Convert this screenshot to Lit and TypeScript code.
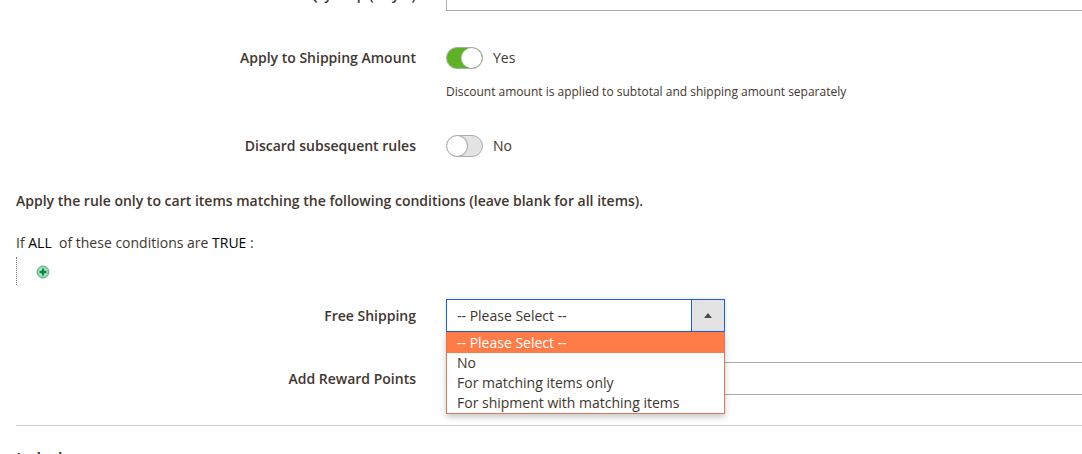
import { LitElement, html, css } from "lit";
import { customElement } from "lit/decorators.js";

@customElement("app-root")
export class AppRoot extends LitElement {
  static styles = css`
    :host {
      display: block;
      width: 1082px;
      height: 454px;
      overflow: hidden;
      background: #fff;
      color: #41362f;
      font-family: "Open Sans", sans-serif;
      font-size: 14px;
      line-height: 20px;
    }
    .page { padding-left: 16px; margin-top: -22px; }
    .row {
      display: grid;
      grid-template-columns: 400px 1fr;
      column-gap: 30px;
      align-items: center;
    }
    .label { text-align: right; font-weight: 600; }
    .input {
      height: 33px;
      box-sizing: border-box;
      border: 1px solid #adadad;
      background: #fff;
      width: 700px;
    }
    .r-qty { margin-bottom: 36px; }
    .r-apply { height: 22px; }
    .note { margin: 13px 0 0 430px; font-size: 12px; line-height: 20px; }
    .r-discard { height: 22px; margin-top: 33px; }
    .toggle-wrap { display: flex; align-items: center; gap: 10px; }
    .toggle {
      width: 37px;
      height: 22px;
      box-sizing: border-box;
      border: 1px solid #adadad;
      border-radius: 11px;
      background: #e3e3e3;
      display: flex;
      overflow: hidden;
    }
    .toggle.on { background: #5fb12a; justify-content: flex-end; }
    .knob {
      width: 20px;
      height: 20px;
      border-radius: 50%;
      background: #fff;
      box-shadow: 0 0 0 1px #adadad;
    }
    .toggle.on .knob { box-shadow: -1px 0 0 0 #cfe6bf; }
    .heading { margin-top: 34px; font-weight: 600; line-height: 20px; }
    .cond { margin-top: 22px; line-height: 20px; }
    .cond b { font-weight: 400; color: #000; }
    .tree {
      margin-top: 4px;
      height: 28px;
      border-left: 1px dotted #777;
      padding-left: 20px;
      display: flex;
      align-items: center;
      box-sizing: border-box;
    }
    .plus { width: 14px; height: 14px; display: block; margin-top: 2px; margin-left: -1px; }
    .r-free { margin-top: 14px; height: 33px; }
    .select-wrap { position: relative; width: 279px; }
    .select {
      width: 279px;
      height: 33px;
      box-sizing: border-box;
      border: 1px solid #1a5fe0;
      display: flex;
      align-items: center;
      background: #fff;
      box-shadow: 0 0 3px 1px rgba(0, 0, 0, 0.08);
    }
    .select span { flex: 1; padding-left: 10px; }
    .arrow {
      width: 33px;
      height: 31px;
      border-left: 1px solid #1a5fe0;
      background: #e3e3e3;
      display: flex;
      align-items: center;
      justify-content: center;
      box-sizing: border-box;
    }
    .arrow i {
      width: 0;
      height: 0;
      border-left: 4.5px solid transparent;
      border-right: 4.5px solid transparent;
      border-bottom: 5px solid #514943;
    }
    .menu {
      position: absolute;
      top: 33px;
      left: 0;
      width: 279px;
      box-sizing: border-box;
      border: 1px solid #d8795a;
      border-top: 0;
      background: #fff;
      box-shadow: 0 3px 6px rgba(0, 0, 0, 0.22);
      z-index: 2;
    }
    .opt { height: 20px; line-height: 20px; padding-left: 10px; }
    .opt.sel { background: #ff7b48; color: #fff; height: 21px; line-height: 21px; }
    .r-reward { margin-top: 30px; }
    .hr { margin-top: 30px; height: 1px; background: #cccccc; }
    .section { margin-top: 21px; font-size: 18px; font-weight: 600; line-height: 24px; }
  `;

  render() {
    return html`
      <div class="page">
        <div class="row r-qty">
          <div class="label">Discount Qty Step (Buy X)</div>
          <div class="input"></div>
        </div>
        <div class="row r-apply">
          <div class="label">Apply to Shipping Amount</div>
          <div class="toggle-wrap">
            <div class="toggle on"><div class="knob"></div></div>
            <span>Yes</span>
          </div>
        </div>
        <div class="note">Discount amount is applied to subtotal and shipping amount separately</div>
        <div class="row r-discard">
          <div class="label">Discard subsequent rules</div>
          <div class="toggle-wrap">
            <div class="toggle"><div class="knob"></div></div>
            <span>No</span>
          </div>
        </div>
        <div class="heading">Apply the rule only to cart items matching the following conditions (leave blank for all items).</div>
        <div class="cond">If <b>ALL</b>&nbsp; of these conditions are <b>TRUE</b> :</div>
        <div class="tree">
          <svg class="plus" viewBox="0 0 14 14">
            <circle cx="7" cy="7" r="6" fill="#8fd0aa" stroke="#5fb083" stroke-width="1"></circle>
            <circle cx="7" cy="7" r="4.2" fill="#c4e8d3"></circle>
            <path d="M7 3.5v7M3.5 7h7" stroke="#078a41" stroke-width="2.4"></path>
          </svg>
        </div>
        <div class="row r-free">
          <div class="label">Free Shipping</div>
          <div class="select-wrap">
            <div class="select">
              <span>-- Please Select --</span>
              <div class="arrow"><i></i></div>
            </div>
            <div class="menu">
              <div class="opt sel">-- Please Select --</div>
              <div class="opt">No</div>
              <div class="opt">For matching items only</div>
              <div class="opt">For shipment with matching items</div>
            </div>
          </div>
        </div>
        <div class="row r-reward">
          <div class="label">Add Reward Points</div>
          <div class="input"></div>
        </div>
        <div class="hr"></div>
        <div class="section">Labels</div>
      </div>
    `;
  }
}
